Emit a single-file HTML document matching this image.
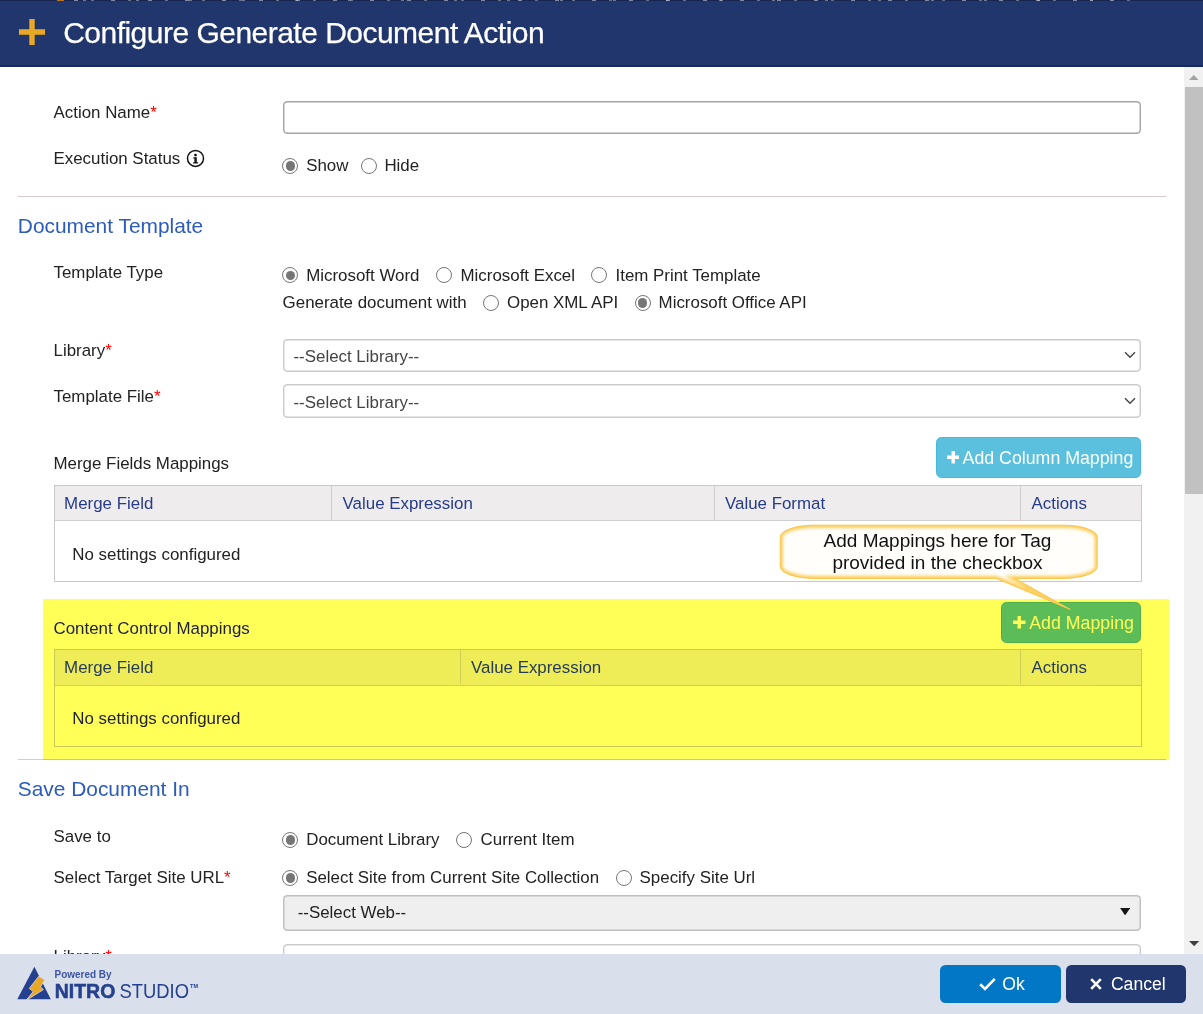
<!DOCTYPE html>
<html lang="en">
<head>
<meta charset="utf-8">
<title>Configure Generate Document Action</title>
<style>
*{box-sizing:border-box;margin:0;padding:0}
html,body{width:1203px;height:1014px;overflow:hidden;background:#fff}
body{font-family:"Liberation Sans",Arial,sans-serif;font-size:16.9px;line-height:20px;color:#222;position:relative}
.abs{position:absolute}
.t{position:absolute;white-space:nowrap;line-height:20px;font-size:16.9px;color:#222}
.req{color:#f00}
#hdr{position:absolute;left:0;top:0;width:1203px;height:67px;background:#20366c;overflow:hidden;z-index:5;border-bottom:2px solid #16295f}
#hdr h1{position:absolute;left:63.2px;top:16.3px;font-weight:normal;font-size:30px;letter-spacing:-0.52px;line-height:34px;-webkit-text-stroke:0.25px #fff;color:#fff;white-space:nowrap}
#content{position:absolute;left:0;top:67px;width:1185px;height:887px;overflow:hidden;background:#fff}
#scroll{position:absolute;left:1184px;top:67px;width:19px;height:887px;background:#f1f1f1}
#thumb{position:absolute;left:1px;top:20px;width:18px;height:407px;background:#c1c1c1}
#ftr{position:absolute;left:0;top:954px;width:1203px;height:60px;background:#dadfec}
.h2{position:absolute;white-space:nowrap;font-size:20.9px;line-height:24px;color:#2b5bbd;font-weight:normal}
.hr{position:absolute;left:18px;width:1148px;height:1.5px;background:#d6cacd}
.radio{position:absolute;width:16px;height:16px;border:1.3px solid #767676;border-radius:50%;background:#fff}
.radio.on::after{content:"";position:absolute;left:50%;top:50%;width:9.6px;height:9.6px;margin:-4.8px 0 0 -4.8px;border-radius:50%;background:#767676}
.inp{position:absolute;left:282.700px;width:858.800px;height:33.400px;box-shadow:inset 0 0 0 1.45px #a6a6a6;border-radius:4.5px;background:#fff}
.sel{position:absolute;left:282.700px;width:858.800px;height:33.400px;box-shadow:inset 0 0 0 1.45px #cbcbcb;border-radius:4.5px;background:#fff}
.sel span{position:absolute;left:10.8px;top:8.5px;white-space:nowrap;color:#444}
.sel svg{position:absolute;right:5px;top:12.5px}
.btn{position:absolute;border-radius:5.5px;color:#fff;white-space:nowrap}
table.g{position:absolute;border-collapse:collapse;table-layout:fixed}
.grid{position:absolute;left:54px;width:1087.5px;border:1.2px solid #c9c9c9;background:#fff}
.grid .hd{position:absolute;left:0;top:0;right:0;height:35.5px;background:#eeeced;border-bottom:1.2px solid #cfcfcf}
.grid .hd i{position:absolute;top:0;width:1.2px;height:34.3px;background:#cfcfcf}
.grid .hd span{position:absolute;top:8.2px;color:#263b8a;white-space:nowrap;font-style:normal}
.grid .bd{position:absolute;left:17.3px;top:59.3px;white-space:nowrap}
</style>
</head>
<body>

<div id="hdr">
  <svg class="abs" style="left:18.7px;top:18.6px" width="26" height="26" viewBox="0 0 26 26"><path d="M10.3 0h5.4v10.3H26v5.4H15.7V26h-5.4V15.7H0v-5.4h10.3z" fill="#e8a824"/></svg>
  <div class="abs" style="left:0;top:0;width:1203px;height:1px;background:#18264f"></div>
  <div class="abs" style="left:57px;top:0;width:7px;height:1.4px;background:#b8751f"></div>
  <div class="abs" style="left:74px;top:0;width:1066px;height:1.2px;background:repeating-linear-gradient(90deg,rgba(215,220,232,.55) 0 4px,rgba(0,0,0,0) 4px 17px,rgba(215,220,232,.4) 17px 20px,rgba(0,0,0,0) 20px 37px),repeating-linear-gradient(90deg,rgba(0,0,0,0) 0 9px,rgba(215,220,232,.45) 9px 12px,rgba(0,0,0,0) 12px 53px)"></div>
  <h1>Configure Generate Document Action</h1>
</div>

<div id="content">
<div id="inner" class="abs" style="left:0;top:-67px;width:1185px;height:1200px">

  <!-- Action name -->
  <div class="t" style="left:53.5px;top:103.1px">Action Name<span class="req">*</span></div>
  <div class="inp" style="top:100.700px"></div>

  <div class="t" style="left:53.5px;top:148.8px">Execution Status</div>
  <svg class="abs" style="left:185.900px;top:148.500px" width="19" height="19" viewBox="0 0 19 19"><circle cx="9.5" cy="9.4" r="8" fill="#fff" stroke="#111" stroke-width="1.5"/><circle cx="9.5" cy="6.1" r="1.400" fill="#111"/><path d="M7.300 8.300h3.500v4.900h1.200v1.400H7.100v-1.400h1.300V9.600H7.300z" fill="#111"/></svg>
  <div class="radio on" style="left:282.3px;top:158px"></div>
  <div class="t" style="left:306.2px;top:156.4px">Show</div>
  <div class="radio" style="left:360.5px;top:158px"></div>
  <div class="t" style="left:384.4px;top:156.4px">Hide</div>

  <div class="hr" style="top:195.8px"></div>

  <!-- Document template -->
  <div class="h2" style="left:17.8px;top:213.9px">Document Template</div>

  <div class="t" style="left:53.5px;top:263px">Template Type</div>
  <div class="radio on" style="left:282.3px;top:267.4px"></div>
  <div class="t" style="left:306.2px;top:265.9px">Microsoft Word</div>
  <div class="radio" style="left:436.3px;top:267.4px"></div>
  <div class="t" style="left:460.5px;top:265.9px">Microsoft Excel</div>
  <div class="radio" style="left:591.3px;top:267.4px"></div>
  <div class="t" style="left:615.5px;top:265.9px">Item Print Template</div>

  <div class="t" style="left:282.6px;top:293.1px">Generate document with</div>
  <div class="radio" style="left:483px;top:294.9px"></div>
  <div class="t" style="left:507px;top:293.1px">Open XML API</div>
  <div class="radio on" style="left:634.6px;top:294.9px"></div>
  <div class="t" style="left:658.6px;top:293.1px">Microsoft Office API</div>

  <div class="t" style="left:53.5px;top:341px">Library<span class="req">*</span></div>
  <div class="sel" style="top:338.600px"><span>--Select Library--</span><svg width="12" height="8" viewBox="0 0 12 8"><path d="M1 1.2l5 5 5-5" fill="none" stroke="#444" stroke-width="1.4"/></svg></div>

  <div class="t" style="left:53.5px;top:387px">Template File<span class="req">*</span></div>
  <div class="sel" style="top:384.300px"><span>--Select Library--</span><svg width="12" height="8" viewBox="0 0 12 8"><path d="M1 1.2l5 5 5-5" fill="none" stroke="#444" stroke-width="1.4"/></svg></div>

  <!-- Merge fields -->
  <div class="t" style="left:53.5px;top:454.4px">Merge Fields Mappings</div>
  <div class="btn" style="left:935.700px;top:437.300px;width:205.800px;height:41px;background:#5bc0de;border:1px solid #46b8da">
    <svg class="abs" style="left:10.3px;top:13.2px" width="12.5" height="12.5" viewBox="0 0 12.5 12.5"><path d="M4.550 0h3.400v4.550h4.550v3.400H7.950v4.550H4.550V7.950H0V4.550h4.550z" fill="#fff"/></svg>
    <span class="abs" style="left:25.9px;top:10px;font-size:17.75px;line-height:20px">Add Column Mapping</span>
  </div>

  <div class="grid" style="top:484.6px;height:97.5px">
    <div class="hd">
      <i style="left:276.3px"></i><i style="left:658.6px"></i><i style="left:965.2px"></i>
      <span style="left:9.1px">Merge Field</span>
      <span style="left:287.6px">Value Expression</span>
      <span style="left:670px">Value Format</span>
      <span style="left:976.5px">Actions</span>
    </div>
    <div class="bd">No settings configured</div>
  </div>

  <!-- Content control -->
  <div class="t" style="left:53.5px;top:618.9px">Content Control Mappings</div>
  <div class="btn" style="left:1001.2px;top:601.800px;width:140.300px;height:41px;background:#5cbc5b;border:1px solid #4cae4c">
    <svg class="abs" style="left:10.900px;top:13.300px" width="12.5" height="12.5" viewBox="0 0 12.5 12.5"><path d="M4.550 0h3.400v4.550h4.550v3.400H7.950v4.550H4.550V7.950H0V4.550h4.550z" fill="#fff"/></svg>
    <span class="abs" style="left:27.100px;top:10px;font-size:17.75px;line-height:20px">Add Mapping</span>
  </div>

  <div class="grid" style="top:649.2px;height:97.5px">
    <div class="hd">
      <i style="left:404.6px"></i><i style="left:965.2px"></i>
      <span style="left:9.1px">Merge Field</span>
      <span style="left:416px">Value Expression</span>
      <span style="left:976.5px">Actions</span>
    </div>
    <div class="bd">No settings configured</div>
  </div>

  <div class="hr" style="top:758.8px"></div>

  <!-- yellow highlight -->
  <div class="abs" style="left:43.2px;top:599.3px;width:1126px;height:160.5px;background:#ffff57;mix-blend-mode:darken"></div>

  <!-- callout -->
  <svg class="abs" style="left:770px;top:515px" width="340" height="105" viewBox="770 515 340 105">
    <defs>
      <clipPath id="cc"><path d="M814.2 525.2H1063.2A34 12 0 0 1 1097.2 537.2V566.400A34 12 0 0 1 1063.2 578.400H1014.900L1070.300 609.500L996.200 578.400H814.2A34 12 0 0 1 780.2 566.400V537.2A34 12 0 0 1 814.2 525.2Z"/></clipPath>
      <filter id="cb" x="-10%" y="-30%" width="120%" height="160%"><feGaussianBlur stdDeviation="1.8"/></filter>
    </defs>
    <path d="M814.2 525.2H1063.2A34 12 0 0 1 1097.2 537.2V566.400A34 12 0 0 1 1063.2 578.400H1014.900L1070.300 609.500L996.200 578.400H814.2A34 12 0 0 1 780.2 566.400V537.2A34 12 0 0 1 814.2 525.2Z" fill="#fffefb"/>
    <g clip-path="url(#cc)"><path d="M814.2 525.2H1063.2A34 12 0 0 1 1097.2 537.2V566.400A34 12 0 0 1 1063.2 578.400H1014.900L1070.300 609.500L996.200 578.400H814.2A34 12 0 0 1 780.2 566.400V537.2A34 12 0 0 1 814.2 525.2Z" fill="none" stroke="#fdd062" stroke-width="5.5" filter="url(#cb)"/></g>
    <path d="M814.2 525.2H1063.2A34 12 0 0 1 1097.2 537.2V566.400A34 12 0 0 1 1063.2 578.400H1014.900L1070.300 609.500L996.200 578.400H814.2A34 12 0 0 1 780.2 566.400V537.2A34 12 0 0 1 814.2 525.2Z" fill="none" stroke="#fbc444" stroke-width="1"/>
    <text x="937.500" y="547.3" text-anchor="middle" font-family="Liberation Sans, Arial, sans-serif" font-size="19px" fill="#111">Add Mappings here for Tag</text>
    <text x="937.500" y="568.5" text-anchor="middle" font-family="Liberation Sans, Arial, sans-serif" font-size="19px" fill="#111">provided in the checkbox</text>
  </svg>

  <!-- Save document in -->
  <div class="h2" style="left:17.8px;top:776.9px">Save Document In</div>

  <div class="t" style="left:53.5px;top:826.9px">Save to</div>
  <div class="radio on" style="left:282.3px;top:831.9px"></div>
  <div class="t" style="left:306.2px;top:830.1px">Document Library</div>
  <div class="radio" style="left:456.3px;top:831.9px"></div>
  <div class="t" style="left:480.6px;top:830.1px">Current Item</div>

  <div class="t" style="left:53.5px;top:867.5px">Select Target Site URL<span class="req">*</span></div>
  <div class="radio on" style="left:282.3px;top:869.8px"></div>
  <div class="t" style="left:306.2px;top:868px">Select Site from Current Site Collection</div>
  <div class="radio" style="left:615.5px;top:869.8px"></div>
  <div class="t" style="left:639.6px;top:868px">Specify Site Url</div>

  <div class="sel" style="top:895.400px;height:36px;background:#efefef;box-shadow:inset 0 0 0 1.5px #c0c0c0"><span style="left:15px;top:7.800px;color:#222">--Select Web--</span><svg width="10.2" height="7.4" viewBox="0 0 10 7.4" style="right:11.700px;top:12.600px"><path d="M0 0h10L5 7.400z" fill="#151515"/></svg></div>

  <div class="t" style="left:53.5px;top:946.5px">Library<span class="req">*</span></div>
  <div class="sel" style="top:944px"></div>

</div>
</div>

<div id="scroll">
  <svg class="abs" style="left:5.1px;top:8px" width="9.6" height="5" viewBox="0 0 10 5"><path d="M0 5h10L5 0z" fill="#a3a3a3"/></svg>
  <div id="thumb"></div>
  <svg class="abs" style="left:4.900px;top:873.500px" width="10.2" height="5.2" viewBox="0 0 10 5"><path d="M0 0h10L5 5z" fill="#404040"/></svg>
</div>

<div id="ftr">
  <svg class="abs" style="left:14px;top:10px" width="190" height="42" viewBox="14 964 190 42">
    <path d="M34.400 966.800L50.800 999.300H17.300z" fill="#25408f"/>
    <path d="M38.800 976.200l6.100 3.600-4.500 7.100 3 2.700-17.300 10.800 7.100-8.800-3.900-3.200z" fill="#e8a725" stroke="#dbe0ed" stroke-width="0.8" stroke-linejoin="round"/>
    <text x="54.500" y="977.500" font-family="Liberation Sans, Arial, sans-serif" font-size="10px" font-weight="bold" fill="#3c55a3" textLength="57" lengthAdjust="spacingAndGlyphs">Powered By</text>
    <text x="54.800" y="998.300" font-family="Liberation Sans, Arial, sans-serif" font-size="19.5px" font-weight="bold" fill="#25408f" stroke="#25408f" stroke-width="0.55" textLength="60.5" lengthAdjust="spacingAndGlyphs">NITRO</text>
    <text x="119.500" y="998.300" font-family="Liberation Sans, Arial, sans-serif" font-size="19.5px" fill="#25408f" textLength="69.500" lengthAdjust="spacingAndGlyphs">STUDIO</text>
    <text x="190" y="988.300" font-family="Liberation Sans, Arial, sans-serif" font-size="5.8px" font-weight="bold" fill="#25408f" textLength="8" lengthAdjust="spacingAndGlyphs">TM</text>
  </svg>
  <div class="btn" style="left:940.3px;top:10.700px;width:120.4px;height:38.3px;background:#0277c5">
    <svg class="abs" style="left:38.5px;top:12.5px" width="17" height="14" viewBox="0 0 17 14"><path d="M1.200 7.300l4.800 4.700L15.800 1.800" fill="none" stroke="#fff" stroke-width="2.600"/></svg>
    <span class="abs" style="left:62px;top:9.200px;font-size:17.6px;line-height:20px">Ok</span>
  </div>
  <div class="btn" style="left:1065.900px;top:10.700px;width:120.300px;height:38.3px;background:#20366c">
    <svg class="abs" style="left:24.500px;top:13.500px" width="12" height="12" viewBox="0 0 12 12"><path d="M1.200 1.200l9.600 9.600M10.800 1.200l-9.600 9.600" fill="none" stroke="#fff" stroke-width="2.600"/></svg>
    <span class="abs" style="left:45px;top:9.200px;font-size:17.6px;line-height:20px">Cancel</span>
  </div>
</div>

</body>
</html>
